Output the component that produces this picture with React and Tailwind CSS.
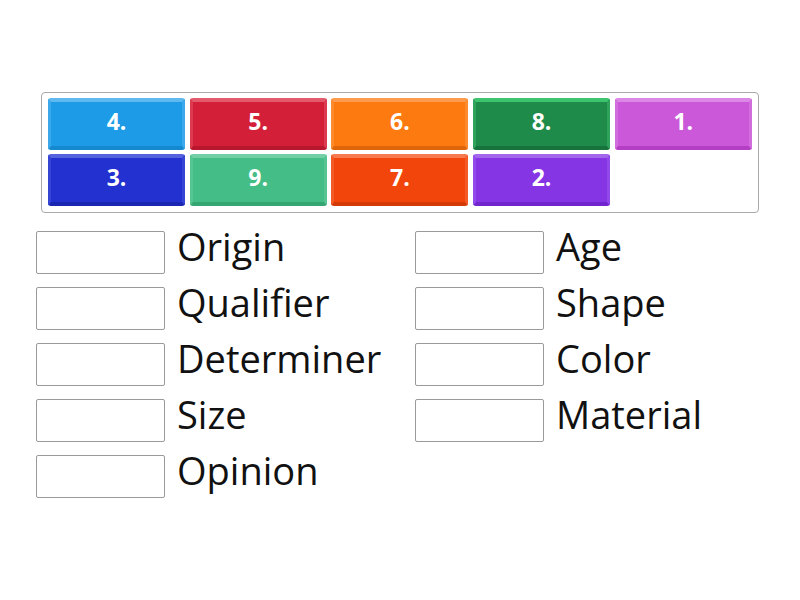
import React from "react";

const tiles = [
  { n: "4.", c: "bg-[#1d9be6] border-t-[#5fb9ef] border-x-[#3aa8ea] border-b-[#1489d0]" },
  { n: "5.", c: "bg-[#d41f38] border-t-[#e25a6c] border-x-[#db3a50] border-b-[#b8172d]" },
  { n: "6.", c: "bg-[#fd7a10] border-t-[#fd9c4e] border-x-[#fd8a2c] border-b-[#de650a]" },
  { n: "8.", c: "bg-[#1f8b4a] border-t-[#3ec46f] border-x-[#2fa25c] border-b-[#17733c]" },
  { n: "1.", c: "bg-[#ca58d8] border-t-[#dc88e6] border-x-[#d26ddd] border-b-[#b43fc4]" },
  { n: "3.", c: "bg-[#2231cf] border-t-[#5562de] border-x-[#3645d4] border-b-[#1a27b3]" },
  { n: "9.", c: "bg-[#45bd86] border-t-[#73cfa5] border-x-[#56c592] border-b-[#35a572]" },
  { n: "7.", c: "bg-[#f2450b] border-t-[#f77a4e] border-x-[#f45a25] border-b-[#d33a06]" },
  { n: "2.", c: "bg-[#8635e4] border-t-[#a367ec] border-x-[#934aea] border-b-[#7025cf]" },
];

const left = ["Origin", "Qualifier", "Determiner", "Size", "Opinion"];
const right = ["Age", "Shape", "Color", "Material"];

const Slot = ({ label }) => (
  <div className="flex items-center h-[43px]">
    <div className="w-[129px] h-[43px] border border-[#9a9a9a] rounded-[2px] bg-white shrink-0" />
    <span className="ml-[12px] text-[38px] leading-none text-[#111] -mt-[13px]">{label}</span>
  </div>
);

export default function App() {
  return (
    <div className="w-[800px] h-[600px] bg-white relative" style={{ fontFamily: '"Open Sans", sans-serif' }}>
      <div className="pt-[92px] pl-[41px]">
        {/* tiles */}
        <div className="w-[718px] h-[121px] border border-[#a9a9a9] rounded-[4px] pl-[6px] pt-[5px] grid grid-cols-[repeat(5,137px)] grid-rows-[52px_52px] gap-x-[4.7px] gap-y-[4px]">
          {tiles.map((t) => (
            <div
              key={t.n}
              className={`${t.c} border-t-[4px] border-b-[4px] border-x-[3px] rounded-[3px] flex items-center justify-center text-white font-bold text-[23px]`}
            >
              <span className="-mt-[6px]">{t.n}</span>
            </div>
          ))}
        </div>
      </div>

      {/* slots */}
      <div className="flex mt-[18px] pl-[36px]">
        <div className="flex flex-col gap-[13px] w-[379px]">
          {left.map((l) => (
            <Slot key={l} label={l} />
          ))}
        </div>
        <div className="flex flex-col gap-[13px]">
          {right.map((l) => (
            <Slot key={l} label={l} />
          ))}
        </div>
      </div>
    </div>
  );
}
